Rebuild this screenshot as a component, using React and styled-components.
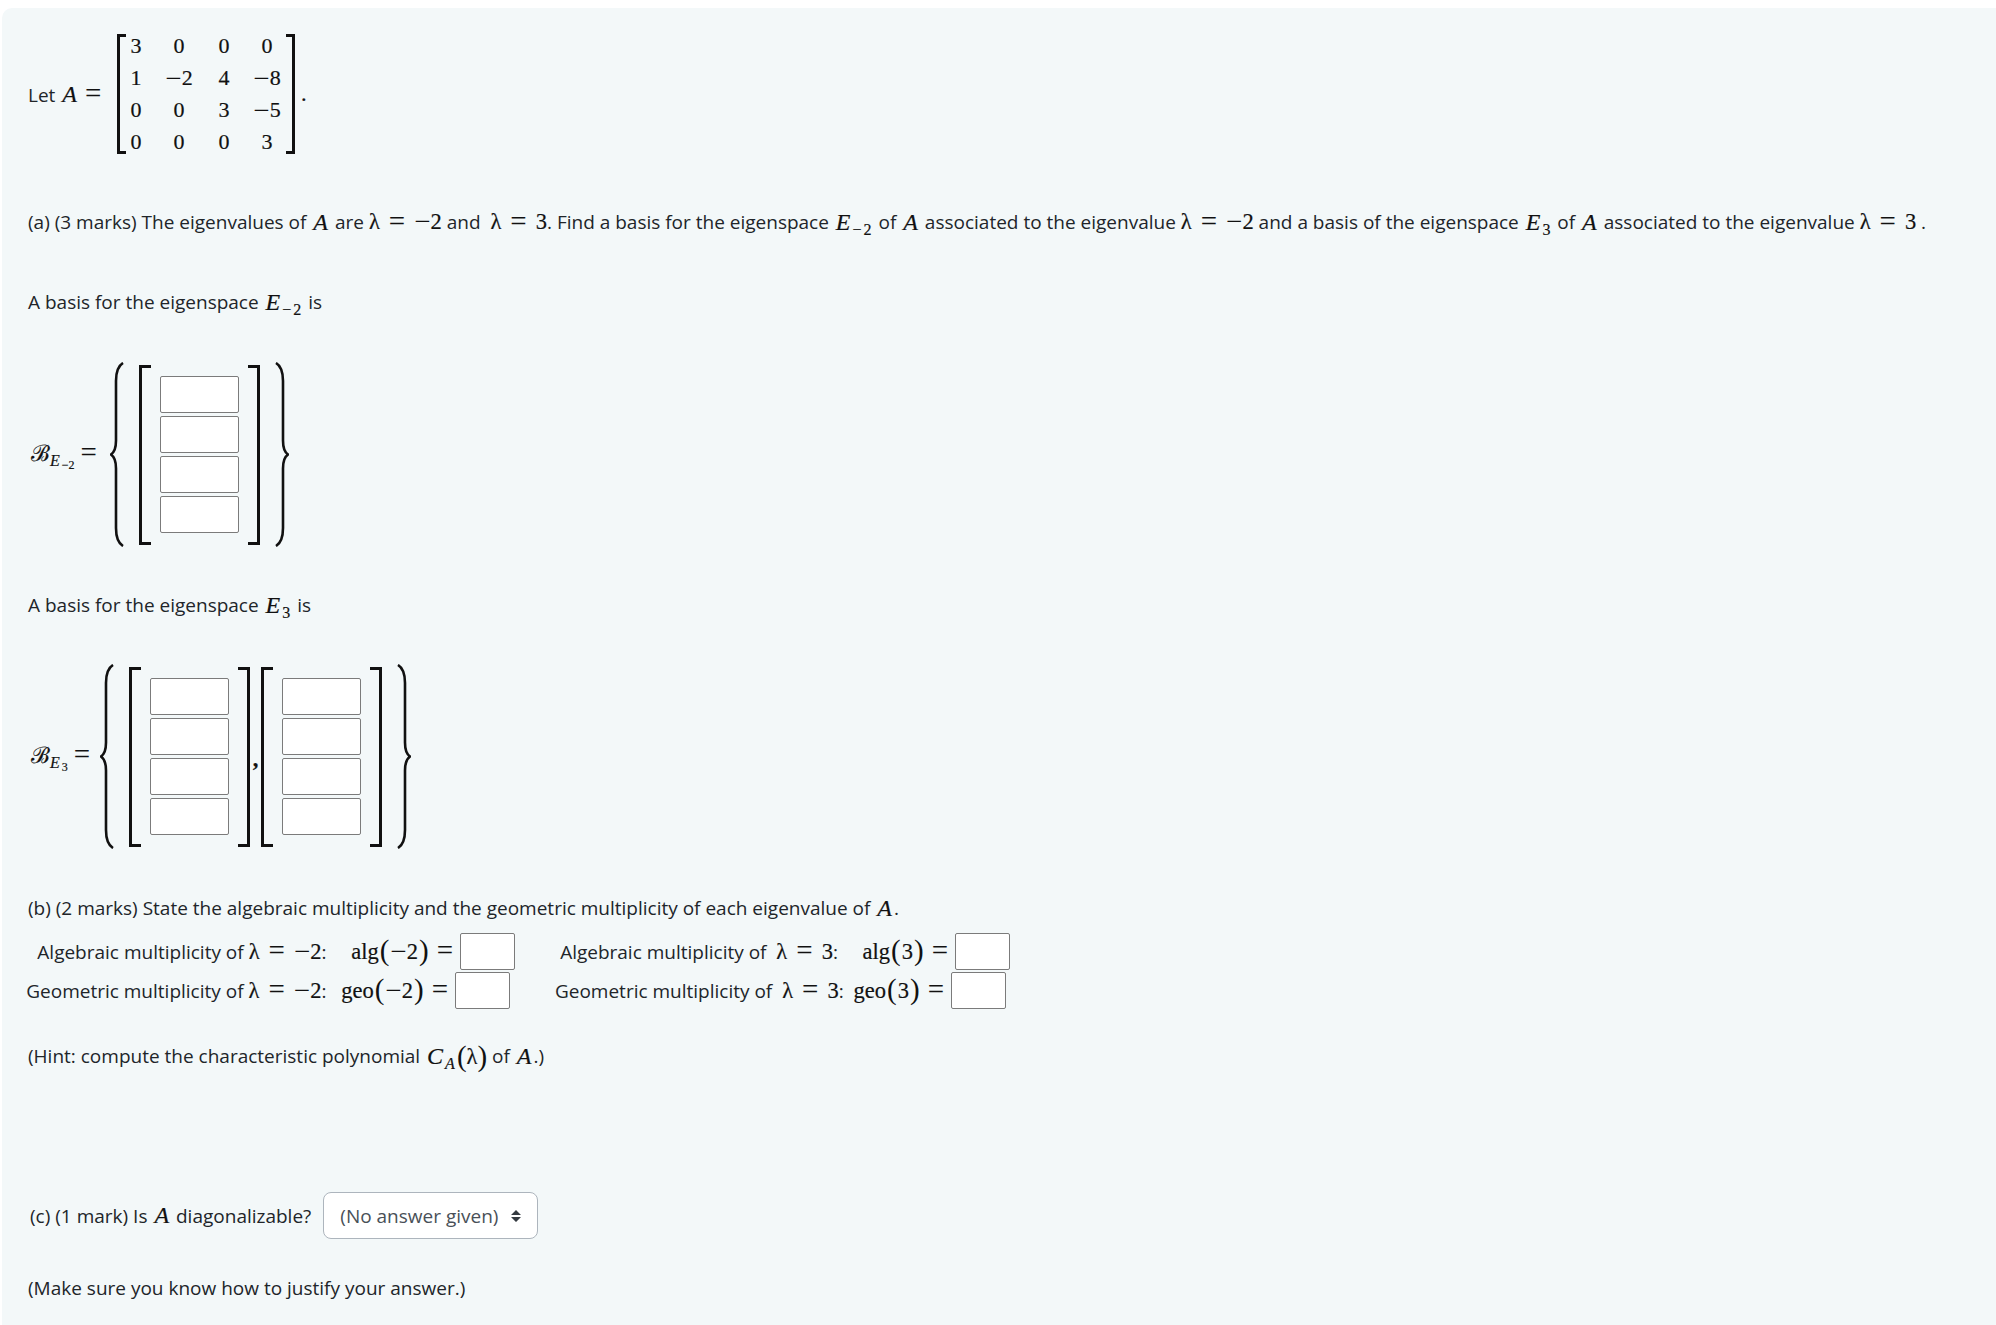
import React from "react";
import styled, { createGlobalStyle } from "styled-components";

const GlobalStyle = createGlobalStyle`
  html, body {
    margin: 0;
    padding: 0;
    height: 100%;
    background: #ffffff;
    overflow: hidden;
  }
`;

const Card = styled.div`
  margin: 8px 0 0 2px;
  height: 1317px;
  box-sizing: border-box;
  padding: 22px 0 0 26px;
  background: #f3f8f9;
  border-radius: 10px 0 0 0;
  color: #212529;
  font-family: "Open Sans", "Noto Sans", sans-serif;
  font-size: 19px;
  white-space: nowrap;
`;

const Line = styled.div`
  display: flex;
  align-items: center;
  height: 28px;
  margin-top: ${props => props.$top}px;
  white-space: pre;
`;

const Math = styled.span`
  font-family: "Liberation Serif", "DejaVu Serif", serif;
  font-size: 22.5px;
  white-space: pre;
  color: #111;
  -webkit-text-stroke: 0.2px #111;
`;

const Var = styled.i`
  font-family: "Liberation Serif", "DejaVu Serif", serif;
  font-size: 24px;
  margin: 0 2px;
`;

const Op = styled.span`
  font-size: 29px;
  line-height: 0;
  vertical-align: -1.5px;
  margin: 0 ${props => props.$gap || 0}px;
  -webkit-text-stroke: 0;
`;

const Sub = styled.sub`
  font-size: 16px;
  line-height: 0;
  vertical-align: -5px;
  letter-spacing: 2px;
`;

const SubSub = styled.sub`
  font-size: 12px;
  line-height: 0;
  vertical-align: -3px;
  letter-spacing: 0;
`;

const MatrixRow = styled.div`
  display: flex;
  align-items: center;
  height: 128px;
  white-space: pre;
`;

const MatrixLabel = styled.div`
  flex: none;
  width: 89px;
`;

const Grid = styled.div`
  display: grid;
  grid-template-columns: 22px 44px 26px 40px;
  column-gap: 10px;
  grid-auto-rows: 32px;
  margin: 0 -1px;
`;

const Cell = styled(Math)`
  display: flex;
  align-items: center;
  justify-content: center;
  font-size: 22px;
`;

const Dot = styled(Math)`
  margin-left: 6px;
`;

const Bracket = styled.div`
  box-sizing: border-box;
  flex: none;
  width: ${props => props.$w || 12}px;
  height: ${props => props.$h}px;
  border: solid #111;
  border-width: 3px ${props => (props.$right ? "3px" : "0")} 3px
    ${props => (props.$right ? "0" : "3px")};
`;

const SetRow = styled.div`
  display: flex;
  align-items: center;
  height: 185px;
  margin-top: ${props => props.$top}px;
`;

const SetLabel = styled(Math)`
  flex: none;
  width: ${props => props.$w}px;
  margin: -5px 0 0 3px;
`;

const Spacer = styled.div`
  flex: none;
  width: ${props => props.$w}px;
`;

const Comma = styled(Math)`
  flex: none;
  width: 11px;
  margin-top: 4px;
  text-align: center;
  font-weight: bold;
`;

const Vector = styled.div`
  display: flex;
  align-items: center;
  gap: 9px;
  flex: none;
`;

const Slots = styled.div`
  display: flex;
  flex-direction: column;
  gap: 3px;
`;

const Box = styled.input`
  display: block;
  box-sizing: border-box;
  width: ${props => props.$w}px;
  height: ${props => props.$h}px;
  margin: 0;
  padding: 0;
  background: #ffffff;
  border: 1px solid #7b7b7b;
  border-radius: 2px;
`;

const MultRow = styled.div`
  display: flex;
  height: 37px;
  margin-top: ${props => props.$top}px;
`;

const MultCell = styled.div`
  display: flex;
  align-items: center;
  justify-content: flex-end;
  width: ${props => props.$w}px;
  white-space: pre;
`;

const SelectLine = styled.div`
  display: flex;
  align-items: center;
  height: 47px;
  margin-top: ${props => props.$top}px;
  padding-left: 2px;
  white-space: pre;
`;

const SelectWrap = styled.div`
  position: relative;
  margin-left: 12px;
`;

const Select = styled.select`
  display: block;
  box-sizing: border-box;
  width: 215px;
  height: 47px;
  padding: 0 0 0 16px;
  appearance: none;
  background: #ffffff;
  border: 1px solid #adb5bd;
  border-radius: 8px;
  color: #495057;
  font-family: "Open Sans", "Noto Sans", sans-serif;
  font-size: 19px;
`;

const Caret = styled.svg`
  position: absolute;
  right: 16px;
  top: 17px;
  pointer-events: none;
`;

const Brace = ({ h, right }) => {
  const m = h / 2;
  const d = `M13 1 C8 4 6 9 6 19 L6 ${m - 14} C6 ${m - 6} 4 ${m - 2} 1 ${m} C4 ${m + 2} 6 ${m + 6} 6 ${m + 14} L6 ${h - 19} C6 ${h - 9} 8 ${h - 4} 13 ${h - 1}`;
  return (
    <svg width="14" height={h} viewBox={`0 0 14 ${h}`} style={{ flex: "none", transform: right ? "scaleX(-1)" : undefined }}>
      <path d={d} fill="none" stroke="#111" strokeWidth="2.6" />
    </svg>
  );
};

const matrix = [
  ["3", "0", "0", "0"],
  ["1", "-2", "4", "-8"],
  ["0", "0", "3", "-5"],
  ["0", "0", "0", "3"]
];

const Eq = ({ gap = 6 }) => <Op $gap={gap}>=</Op>;
const Minus = () => <Op>−</Op>;
const LambdaIs = ({ neg, value }) => (
  <Math>
    λ<Eq gap={9} />
    {neg && <Minus />}
    {value}
  </Math>
);
// alg(-2), geo(3) and so on
const Fn = ({ name, neg, value }) => (
  <Math>
    {name}
    <Op $gap={1}>(</Op>
    {neg && <Minus />}
    {value}
    <Op $gap={1}>)</Op>
    <Eq gap={7} />
  </Math>
);

const BasisVector = () => (
  <Vector>
    <Bracket $h={180} />
    <Slots>
      <Box $w={79} $h={37} />
      <Box $w={79} $h={37} />
      <Box $w={79} $h={37} />
      <Box $w={79} $h={37} />
    </Slots>
    <Bracket $h={180} $right />
  </Vector>
);

const App = () => (
  <>
    <GlobalStyle />
    <Card>
      <MatrixRow>
        <MatrixLabel>
          Let <Math><Var>A</Var><Eq /></Math>
        </MatrixLabel>
        <Bracket $h={120} $w={9} />
        <Grid>
          {matrix.flat().map((value, i) => (
            <Cell key={i}>
              {value[0] === "-" ? <Minus /> : null}
              {value.replace("-", "")}
            </Cell>
          ))}
        </Grid>
        <Bracket $h={120} $w={9} $right />
        <Dot>.</Dot>
      </MatrixRow>

      <Line $top={50}>
        (a) (3 marks) The eigenvalues of <Math><Var>A</Var></Math> are <LambdaIs neg value="2" /> and  <LambdaIs value="3" />. Find a basis for the eigenspace <Math><Var>E</Var><Sub>−2</Sub></Math> of <Math><Var>A</Var></Math> associated to the eigenvalue <LambdaIs neg value="2" /> and a basis of the eigenspace <Math><Var>E</Var><Sub>3</Sub></Math> of <Math><Var>A</Var></Math> associated to the eigenvalue <LambdaIs value="3" /> .
      </Line>

      <Line $top={52}>
        A basis for the eigenspace <Math><Var>E</Var><Sub>−2</Sub></Math> is
      </Line>

      <SetRow $top={46}>
        <SetLabel $w={79}>ℬ<Sub><i>E</i><SubSub>−2</SubSub></Sub><Eq /></SetLabel>
        <Brace h={185} />
        <Spacer $w={15} />
        <BasisVector />
        <Spacer $w={15} />
        <Brace h={185} right />
      </SetRow>

      <Line $top={44}>
        A basis for the eigenspace <Math><Var>E</Var><Sub>3</Sub></Math> is
      </Line>

      <SetRow $top={45}>
        <SetLabel $w={69}>ℬ<Sub><i>E</i><SubSub>3</SubSub></Sub><Eq /></SetLabel>
        <Brace h={185} />
        <Spacer $w={15} />
        <BasisVector />
        <Comma>,</Comma>
        <BasisVector />
        <Spacer $w={15} />
        <Brace h={185} right />
      </SetRow>

      <Line $top={45}>
        (b) (2 marks) State the algebraic multiplicity and the geometric multiplicity of each eigenvalue of <Math><Var>A</Var></Math>.
      </Line>

      <MultRow $top={11}>
        <MultCell $w={487}>
          Algebraic multiplicity of <LambdaIs neg value="2" />:     <Fn name="alg" neg value="2" /><Box $w={55} $h={37} />
        </MultCell>
        <MultCell $w={495}>
          Algebraic multiplicity of  <LambdaIs value="3" />:     <Fn name="alg" value="3" /><Box $w={55} $h={37} />
        </MultCell>
      </MultRow>
      <MultRow $top={2}>
        <MultCell $w={482}>
          Geometric multiplicity of <LambdaIs neg value="2" />:   <Fn name="geo" neg value="2" /><Box $w={55} $h={37} />
        </MultCell>
        <MultCell $w={496}>
          Geometric multiplicity of  <LambdaIs value="3" />:  <Fn name="geo" value="3" /><Box $w={55} $h={37} />
        </MultCell>
      </MultRow>

      <Line $top={33}>
        (Hint: compute the characteristic polynomial <Math><Var>C</Var><Sub><i>A</i></Sub><Op>(</Op>λ<Op>)</Op></Math> of <Math><Var>A</Var></Math>.)
      </Line>

      <SelectLine $top={122}>
        (c) (1 mark) Is <Math><Var>A</Var></Math> diagonalizable?
        <SelectWrap>
          <Select defaultValue="">
            <option value="">(No answer given)</option>
            <option value="yes">Yes</option>
            <option value="no">No</option>
          </Select>
          <Caret width="12" height="14" viewBox="0 0 12 14">
            <path d="M6 1 L11 6 L1 6 Z M1 8 L11 8 L6 13 Z" fill="#343a40" />
          </Caret>
        </SelectWrap>
      </SelectLine>

      <Line $top={35}>(Make sure you know how to justify your answer.)</Line>
    </Card>
  </>
);

export default App;
